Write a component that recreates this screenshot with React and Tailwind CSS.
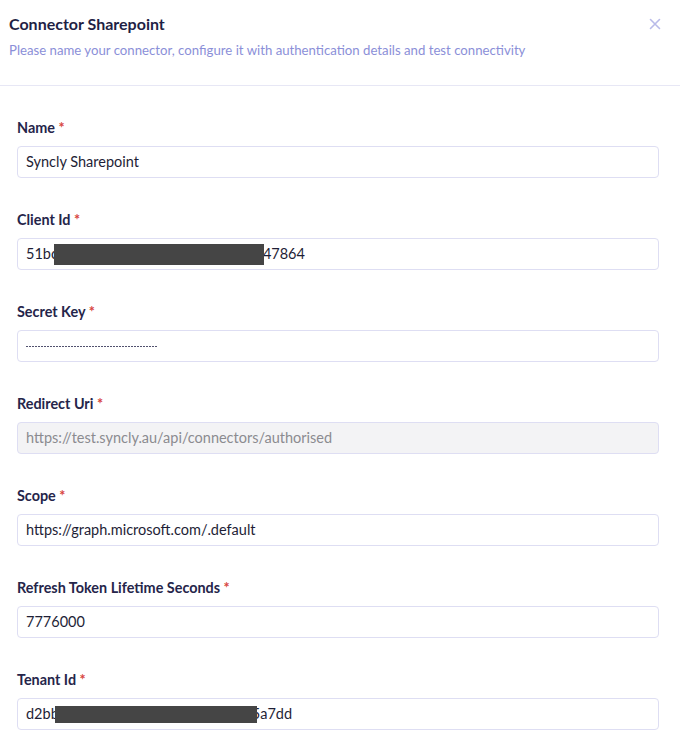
import React from "react";

const font = { fontFamily: "Lato, 'Noto Sans', sans-serif" };

function Label({ children }) {
  return (
    <div className="text-[14.4px] font-bold text-[#25254a] leading-[18px] h-[18px]">
      {children} <span className="text-[#d8453e]">*</span>
    </div>
  );
}

function Box({ children, disabled }) {
  return (
    <div
      className={`mt-[9px] h-[32px] rounded-[4px] border border-[#dedef3] flex items-center px-[8px] text-[14.5px] ${
        disabled ? "bg-[#f3f3f5] text-[#8b8b90]" : "bg-white text-[#1e1e36]"
      }`}
    >
      {children}
    </div>
  );
}

function Field({ label, children, disabled }) {
  return (
    <div className="h-[92px] pt-[10px]">
      <Label>{label}</Label>
      <Box disabled={disabled}>{children}</Box>
    </div>
  );
}

export default function App() {
  const dots = Array.from({ length: 44 });
  return (
    <div className="w-[680px] h-[752px] bg-white overflow-hidden" style={font}>
      <div className="h-[86px] border-b border-[#e7e7f5] pl-[9px] pr-[20px] relative">
        <div className="pt-[14px] text-[16px] font-bold text-[#1f1f45] leading-[20px]">Connector Sharepoint</div>
        <div className="mt-[8px] text-[13.2px] text-[#8b8fd8] leading-[16px]">
          Please name your connector, configure it with authentication details and test connectivity
        </div>
        <button className="absolute right-[19px] top-[18px] text-[#b9bbe9]">
          <svg width="12" height="12" viewBox="0 0 12 12" fill="none" stroke="currentColor" strokeWidth="1.6" strokeLinecap="round">
            <path d="M1.5 1.5L10.5 10.5M10.5 1.5L1.5 10.5" />
          </svg>
        </button>
      </div>
      <div className="pl-[17px] pr-[21px] pt-[23px] w-full">
        <Field label="Name">Syncly Sharepoint</Field>
        <Field label="Client Id">
          <span>51bc</span>
          <span className="relative z-10 -ml-[4px] -mr-[1px] w-[210px] h-[21px] bg-[#454545]" />
          <span>47864</span>
        </Field>
        <Field label="Secret Key">
          <div className="flex items-center gap-[1.5px] pt-[1px]">
            {dots.map((_, i) => (
              <span key={i} className="w-[1.5px] h-[1.5px] rounded-full bg-[#3a3a5a]" />
            ))}
          </div>
        </Field>
        <Field label="Redirect Uri" disabled>
          https://test.syncly.au/api/connectors/authorised
        </Field>
        <Field label="Scope">https://graph.microsoft.com/.default</Field>
        <Field label="Refresh Token Lifetime Seconds">7776000</Field>
        <Field label="Tenant Id">
          <span>d2bb</span>
          <span className="relative z-10 -ml-[4px] -mr-[5px] w-[202px] h-[17px] bg-[#454545]" />
          <span>5a7dd</span>
        </Field>
      </div>
    </div>
  );
}
